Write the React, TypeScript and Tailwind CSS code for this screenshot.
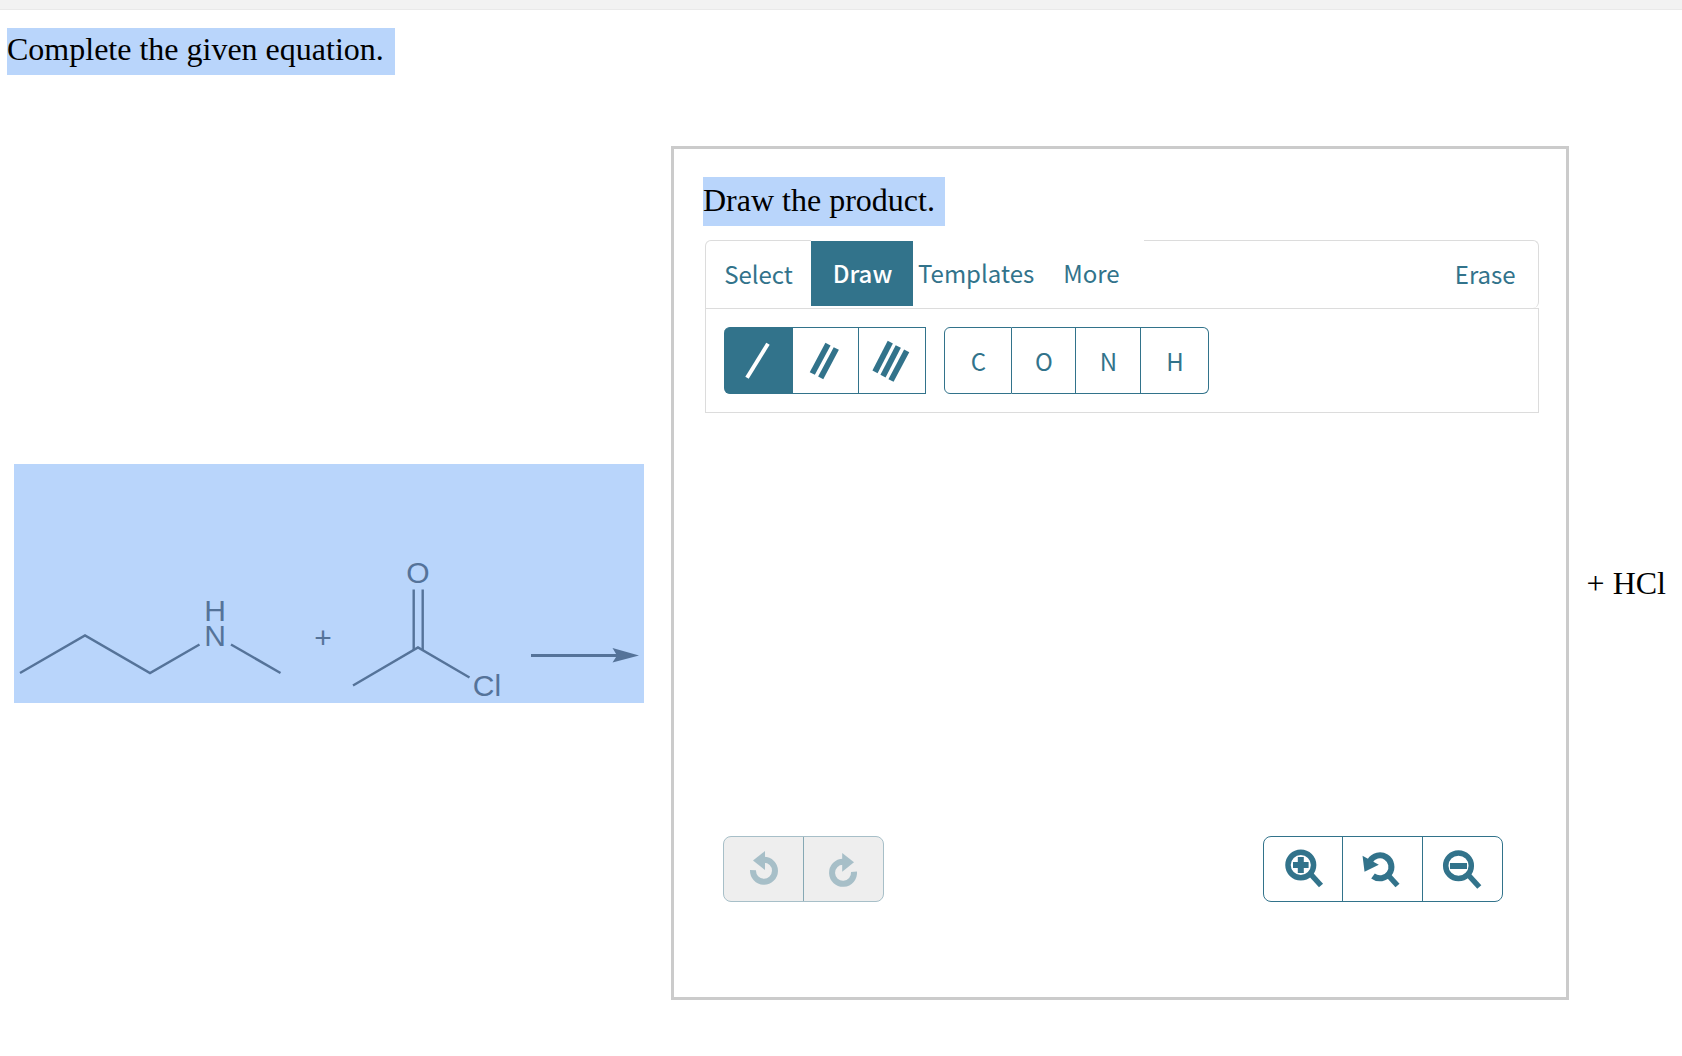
import React, { useState } from "react";

const ICON = "h-10 w-10 overflow-visible";

function Bond({ lines, width }: { lines: number[][]; width: number }) {
  return (
    <svg viewBox="0 1 40 40" className={ICON} stroke="currentColor" strokeWidth={width} aria-hidden="true">
      {lines.map((l) => (
        <line key={l.join()} x1={l[0]} y1={l[1]} x2={l[2]} y2={l[3]} />
      ))}
    </svg>
  );
}

const bonds = [
  { name: "Single bond", width: 4, size: "w-[69px] rounded-l-md", lines: [[8, 37.8, 29, 3.8]] },
  {
    name: "Double bond",
    width: 5.8,
    size: "w-[66px] border-r",
    lines: [
      [6.3, 33.5, 22, 4.2],
      [14.7, 37.8, 30.3, 8.5],
    ],
  },
  {
    name: "Triple bond",
    width: 5.8,
    size: "w-[67px] border-r",
    lines: [
      [3, 31.8, 18.3, 2.2],
      [11, 36.1, 26.3, 6.5],
      [19, 40.5, 34.7, 10.8],
    ],
  },
];

const atoms = [
  { name: "C", size: "w-[68px] rounded-l-md border-l" },
  { name: "O", size: "w-16" },
  { name: "N", size: "w-[65px]" },
  { name: "H", size: "w-[68px] rounded-r-md" },
];

function Reactants() {
  return (
    <svg
      viewBox="14 464 630 239"
      className="w-[630px] shrink-0 bg-[#b9d5fb]"
      role="img"
      aria-label="N-methylpropylamine plus acetyl chloride"
    >
      <g fill="none" stroke="#557399" strokeWidth="2.4">
        <path d="M20 673 L85 635.5 L150 673 L199.5 644.5" />
        <path d="M231 644.5 L280.5 673" />
        <path d="M353 685.5 L418 647.5 L469.5 677.5" />
        <path d="M413.7 589.5 V650 M422.7 589.5 V650" />
        <path d="M531 655.5 H617" strokeWidth="2.8" />
      </g>
      <path d="M612.5 648 L639 655.5 L612.5 662.5 L617 655.5 Z" fill="#557399" />
      <g fill="#557399" textAnchor="middle" fontFamily="Liberation Sans, sans-serif" fontSize="30">
        <text>
          <tspan x="215" y="621">H</tspan>
          <tspan x="215" y="646">N</tspan>
        </text>
        <text x="323" y="648">+</text>
        <text x="418" y="583">O</text>
        <text x="487" y="696">Cl</text>
      </g>
    </svg>
  );
}

export default function App() {
  const [bond, setBond] = useState("Single bond");
  return (
    <div className="bg-white pb-9 font-['Liberation_Serif',serif] text-[32px] text-black">
      <div className="h-[10px] border-b border-[#e9e9e9] bg-[#f2f2f2]" />
      <h1 className="mt-[18px] ml-[7px] w-fit bg-[#b9d5fb] pr-[11px] pb-1 leading-[43px]">Complete the given equation.</h1>

      <main className="mt-[71px] flex items-center pr-4 pl-[14px]">
        <Reactants />

        <section className="mb-5 ml-[27px] flex-1 border-[3px] border-[#cbcbcb] px-[27px] pt-7 pb-[95px]">
          <h2 className="ml-[2px] w-fit bg-[#b9d5fb] pr-[10px] pb-[2px] leading-[47px]">Draw the product.</h2>

          <div className="mt-[14px] ml-1 font-['Noto_Sans_CJK_SC',sans-serif] text-2xl text-[#32738b]">
            <div className="flex h-[68px] rounded-t-md rounded-br-md border border-b-0 border-[#dcdcdc] font-normal">
              <button className="w-[105px] pb-[2px] text-center">Select</button>
              <nav className="-mt-px flex w-[333px] items-start bg-white pt-px">
                <button className="h-[65px] w-[102px] bg-[#32738b] pb-[2px] pl-px font-medium text-white">Draw</button>
                <button className="ml-[5px] h-[65px] pb-[2px]">Templates</button>
                <button className="ml-[29px] h-[65px] pb-[2px]">More</button>
              </nav>
              <button className="mr-[22px] ml-auto pb-[2px]">Erase</button>
            </div>

            <div className="flex h-[105px] items-center gap-[18px] border border-[#dcdcdc] px-[18px]">
              <div className="flex">
                {bonds.map((b) => (
                  <button
                    key={b.name}
                    aria-label={b.name}
                    aria-pressed={bond === b.name}
                    onClick={() => setBond(b.name)}
                    className={`flex h-[67px] items-center justify-center border-y border-[#32738b] ${b.size} ${
                      bond === b.name ? "bg-[#32738b] text-white" : "bg-white"
                    }`}
                  >
                    <Bond lines={b.lines} width={b.width} />
                  </button>
                ))}
              </div>
              <div className="flex">
                {atoms.map((a) => (
                  <button key={a.name} className={`h-[67px] border-y border-r border-[#32738b] pt-px pl-px ${a.size}`}>
                    {a.name}
                  </button>
                ))}
              </div>
            </div>
          </div>

          <div className="h-[423px]" />

          <div className="mr-[36px] ml-[22px] flex justify-between text-[#32738b]">
            <div className="flex h-[66px] overflow-hidden rounded-lg border border-[#a7bfc8] bg-[#eeeeee] text-[#a7bfc8]">
              <button disabled aria-label="Undo" className="flex w-20 items-center justify-center border-r border-[#86a8b4]">
                <svg viewBox="1 0 40 40" className={ICON} aria-hidden="true">
                  <path d="M10 21.2 A11 11 0 1 0 21 10.7" fill="none" stroke="currentColor" strokeWidth="6" />
                  <path d="M10 11.5 L22 2 V21 Z" fill="currentColor" />
                </svg>
              </button>
              <button disabled aria-label="Redo" className="flex w-[79px] items-center justify-center">
                <svg viewBox="1 0 40 40" className={ICON} aria-hidden="true">
                  <path d="M31 22.8 A11 11 0 1 1 20 12.8" fill="none" stroke="currentColor" strokeWidth="6" />
                  <path d="M31 13.3 L19.2 4 V22.7 Z" fill="currentColor" />
                </svg>
              </button>
            </div>

            <div className="flex h-[66px] rounded-lg border border-[#32738b]">
              <button aria-label="Zoom in" className="flex w-[79px] items-center justify-center border-r border-[#32738b]">
                <svg viewBox="0 0 40 40" className={ICON} fill="none" stroke="currentColor" strokeWidth="5.5" aria-hidden="true">
                  <circle cx="17.8" cy="16" r="12.8" />
                  <path d="M28 25.5 L38 36.5" />
                  <path d="M10 16 H25.6 M17.8 8 V24" strokeWidth="6" />
                </svg>
              </button>
              <button aria-label="Reset zoom" className="flex w-20 items-center justify-center border-r border-[#32738b]">
                <svg viewBox="0 0 40 40" className={ICON} fill="none" stroke="currentColor" strokeWidth="6" aria-hidden="true">
                  <path d="M11 27 A11.5 11.5 0 1 0 8 12" />
                  <path d="M25 25 L35.5 36.5" strokeWidth="5.5" />
                  <path d="M0.5 6.7 L16.8 15.7 L2.5 22.7 Z" fill="currentColor" stroke="none" />
                </svg>
              </button>
              <button aria-label="Zoom out" className="flex w-[79px] items-center justify-center">
                <svg viewBox="0 0 40 40" className={ICON} fill="none" stroke="currentColor" strokeWidth="5.5" aria-hidden="true">
                  <circle cx="16.5" cy="16.7" r="12.8" />
                  <path d="M26.8 26.5 L37.3 38" />
                  <path d="M8 17 H25" strokeWidth="6" />
                </svg>
              </button>
            </div>
          </div>
        </section>

        <p className="ml-[18px] shrink-0 leading-[47px]">+ HCl</p>
      </main>
    </div>
  );
}
